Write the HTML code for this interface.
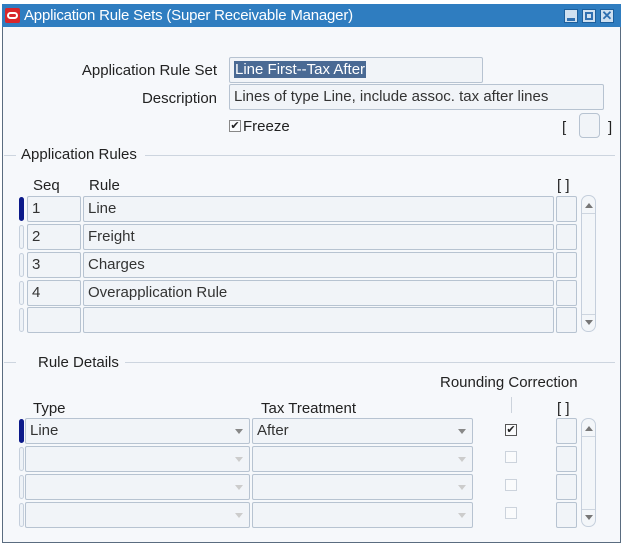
<!DOCTYPE html>
<html><head><meta charset="utf-8"><style>
*{margin:0;padding:0;box-sizing:border-box}
body{width:623px;height:545px;background:#fff;position:relative;overflow:hidden;font-family:"Liberation Sans",sans-serif;font-size:15px;color:#222}
.a{position:absolute}
.win{left:2px;top:4px;width:619px;height:539px;background:#f6f8fb;border:1px solid #5a6c80;border-top:none}
.title{left:2px;top:4px;width:619px;height:23px;background:#2f7dc0;color:#fff;font-size:15px;line-height:23px;padding-left:22px;letter-spacing:-0.2px}
.f{position:absolute;background:#f1f4f8;border:1px solid #b7c3d1;border-radius:2px;height:26px;line-height:24px;padding-left:4px;font-size:15px;color:#333;white-space:nowrap}
.lab{position:absolute;font-size:15px;color:#222;white-space:nowrap}
.ind{position:absolute;width:5px;height:24px;border:1px solid #c5cfdc;border-radius:3px;background:#eef2f7}
.ind.on{background:#0c1a8a;border-color:#0c1a8a}
.sb{position:absolute;width:15px;border:1px solid #c5cfdc;border-radius:7px;background:#f3f6f9}
.dd{position:absolute;right:6px;top:10px;width:0;height:0;border-left:4px solid transparent;border-right:4px solid transparent;border-top:5px solid #888}
.dd.l{border-top-color:#ccc}
.cb{position:absolute;width:12px;height:12px;border:1px solid #ccd3dc;background:#fafbfc}
.hl{position:absolute;height:1px;background:#cdd5df}
</style></head><body>
<div class="a win"></div>
<div class="a title">Application Rule Sets (Super Receivable Manager)</div>
<div class="a" style="left:5px;top:8px;width:15px;height:15px;background:#d8262c;border-radius:2px"><div class="a" style="left:2px;top:4px;width:11px;height:7px;border:2px solid #fff;border-radius:4px"></div></div>
<div class="a" style="left:564px;top:9px;width:14px;height:14px;background:#cfe0f0;border:1px solid #1d5f9c"><div class="a" style="left:2px;top:8px;width:8px;height:3px;background:#2f6fb0"></div></div>
<div class="a" style="left:582px;top:9px;width:14px;height:14px;background:#cfe0f0;border:1px solid #1d5f9c"><div class="a" style="left:2px;top:2px;width:8px;height:8px;border:2px solid #2f6fb0"></div></div>
<div class="a" style="left:600px;top:9px;width:14px;height:14px;background:#cfe0f0;border:1px solid #1d5f9c;color:#2f6fb0;font-size:13px;font-weight:bold;line-height:12px;text-align:center">✕</div>

<div class="lab" style="right:406px;top:62px">Application Rule Set</div>
<div class="f" style="left:229px;top:57px;width:254px"><span style="background:#4a6a94;color:#fff;padding:0 1px">Line First--Tax After</span></div>
<div class="lab" style="right:406px;top:90px">Description</div>
<div class="f" style="left:229px;top:84px;width:375px">Lines of type Line, include assoc. tax after lines</div>
<div class="cb" style="left:229px;top:120px;border-color:#888;font-size:11px;line-height:10px;text-align:center">✔</div>
<div class="lab" style="left:243px;top:118px">Freeze</div>
<div class="lab" style="left:562px;top:119px">[</div>
<div class="f" style="left:579px;top:113px;width:21px;height:25px;border-radius:4px"></div>
<div class="lab" style="left:608px;top:119px">]</div>

<div class="hl" style="left:4px;top:155px;width:12px"></div>
<div class="lab" style="left:21px;top:146px">Application Rules</div>
<div class="hl" style="left:145px;top:155px;width:470px"></div>
<div class="lab" style="left:33px;top:177px">Seq</div>
<div class="lab" style="left:89px;top:177px">Rule</div>
<div class="lab" style="left:557px;top:177px">[ ]</div>

<div class="ind on" style="left:19px;top:197px"></div>
<div class="f" style="left:27px;top:196px;width:54px">1</div><div class="f" style="left:83px;top:196px;width:471px">Line</div><div class="f" style="left:556px;top:196px;width:21px"></div>
<div class="ind" style="left:19px;top:225px"></div>
<div class="f" style="left:27px;top:224px;width:54px">2</div><div class="f" style="left:83px;top:224px;width:471px">Freight</div><div class="f" style="left:556px;top:224px;width:21px"></div>
<div class="ind" style="left:19px;top:253px"></div>
<div class="f" style="left:27px;top:252px;width:54px">3</div><div class="f" style="left:83px;top:252px;width:471px">Charges</div><div class="f" style="left:556px;top:252px;width:21px"></div>
<div class="ind" style="left:19px;top:281px"></div>
<div class="f" style="left:27px;top:280px;width:54px">4</div><div class="f" style="left:83px;top:280px;width:471px">Overapplication Rule</div><div class="f" style="left:556px;top:280px;width:21px"></div>
<div class="ind" style="left:19px;top:308px"></div>
<div class="f" style="left:27px;top:307px;width:54px"></div><div class="f" style="left:83px;top:307px;width:471px"></div><div class="f" style="left:556px;top:307px;width:21px"></div>
<div class="sb" style="left:581px;top:195px;height:137px"><div class="a" style="left:3px;top:7px;border-left:4px solid transparent;border-right:4px solid transparent;border-bottom:5px solid #777"></div><div class="hl" style="left:0;top:17px;width:13px"></div><div class="hl" style="left:0;top:118px;width:13px"></div><div class="a" style="left:3px;top:124px;border-left:4px solid transparent;border-right:4px solid transparent;border-top:5px solid #777"></div></div>

<div class="hl" style="left:4px;top:362px;width:12px"></div>
<div class="lab" style="left:38px;top:354px">Rule Details</div>
<div class="hl" style="left:125px;top:362px;width:490px"></div>
<div class="lab" style="left:440px;top:374px">Rounding Correction</div>
<div class="a" style="left:511px;top:397px;width:1px;height:16px;background:#ccd3dc"></div>
<div class="lab" style="left:33px;top:400px">Type</div>
<div class="lab" style="left:261px;top:400px">Tax Treatment</div>
<div class="lab" style="left:557px;top:400px">[ ]</div>

<div class="ind on" style="left:19px;top:419px"></div>
<div class="f" style="left:25px;top:418px;width:225px">Line<div class="dd"></div></div><div class="f" style="left:252px;top:418px;width:221px">After<div class="dd"></div></div>
<div class="cb" style="left:505px;top:424px;border-color:#555;font-size:11px;line-height:10px;text-align:center">✔</div><div class="f" style="left:556px;top:418px;width:21px"></div>
<div class="ind" style="left:19px;top:447px"></div>
<div class="f" style="left:25px;top:446px;width:225px"><div class="dd l"></div></div><div class="f" style="left:252px;top:446px;width:221px"><div class="dd l"></div></div>
<div class="cb" style="left:505px;top:451px"></div><div class="f" style="left:556px;top:446px;width:21px"></div>
<div class="ind" style="left:19px;top:475px"></div>
<div class="f" style="left:25px;top:474px;width:225px"><div class="dd l"></div></div><div class="f" style="left:252px;top:474px;width:221px"><div class="dd l"></div></div>
<div class="cb" style="left:505px;top:479px"></div><div class="f" style="left:556px;top:474px;width:21px"></div>
<div class="ind" style="left:19px;top:503px"></div>
<div class="f" style="left:25px;top:502px;width:225px"><div class="dd l"></div></div><div class="f" style="left:252px;top:502px;width:221px"><div class="dd l"></div></div>
<div class="cb" style="left:505px;top:507px"></div><div class="f" style="left:556px;top:502px;width:21px"></div>
<div class="sb" style="left:581px;top:418px;height:109px"><div class="a" style="left:3px;top:7px;border-left:4px solid transparent;border-right:4px solid transparent;border-bottom:5px solid #777"></div><div class="hl" style="left:0;top:17px;width:13px"></div><div class="hl" style="left:0;top:90px;width:13px"></div><div class="a" style="left:3px;top:96px;border-left:4px solid transparent;border-right:4px solid transparent;border-top:5px solid #777"></div></div>
</body></html>
